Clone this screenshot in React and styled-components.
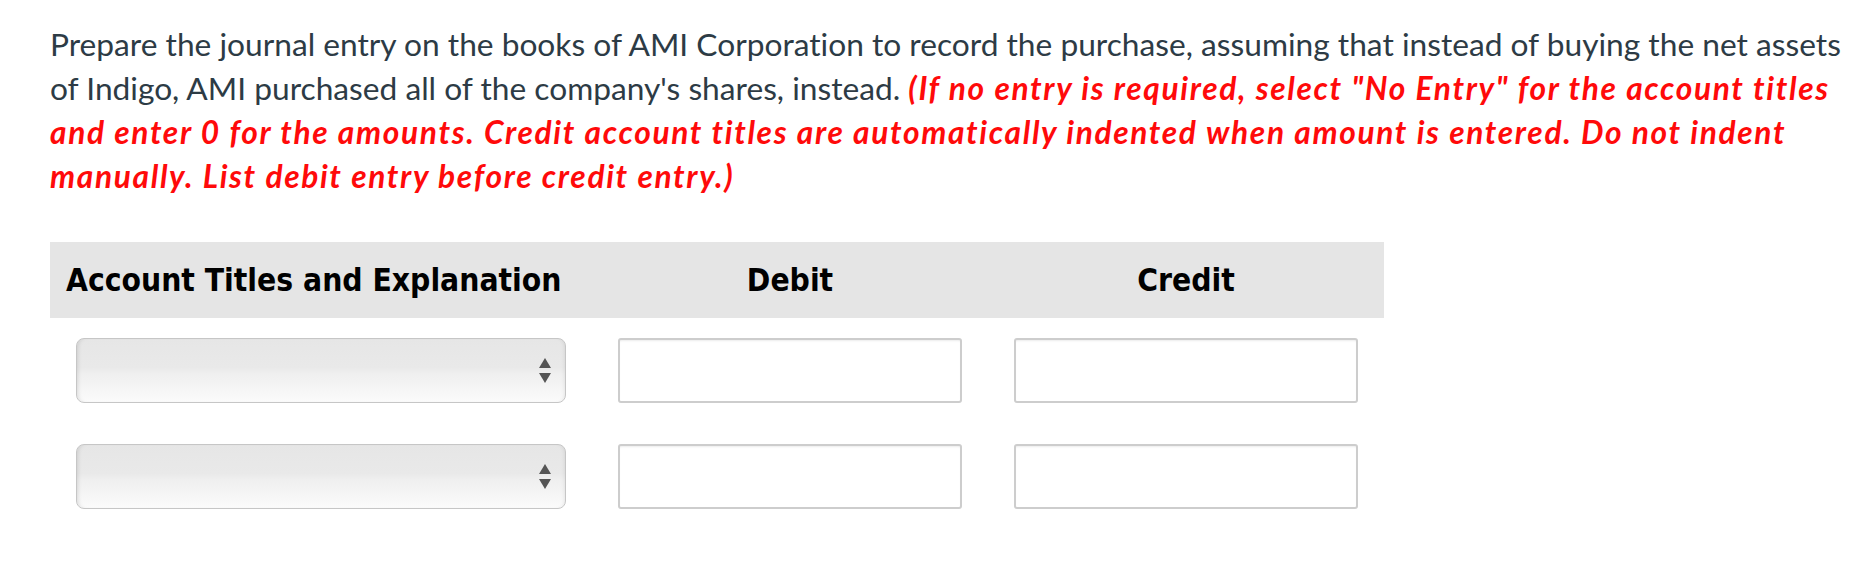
import styled, { createGlobalStyle } from 'styled-components'

const GlobalStyle = createGlobalStyle`
body {
  margin: 0;
  background: #fff;
}
`

const Page = styled.div`
padding: 22px 18px 0 50px;
`

const Question = styled.p`
margin: 0;
font-family: Lato, "Open Sans", sans-serif;
font-size: 31.7px;
line-height: 44px;
font-variant-ligatures: none;
color: #2d3b45;
`

const Hint = styled.em`
color: #ff0a0a;
font-weight: 700;
font-style: italic;
letter-spacing: 1.65px;
`

const Table = styled.div`
margin-top: 44px;
display: grid;
grid-template-columns: 542px 396px 396px;
width: 1334px;
`

const HeadCell = styled.div`
height: 76px;
display: flex;
align-items: center;
justify-content: ${(props) => props.align === 'left' ? 'flex-start' : 'center'};
padding-left: ${(props) => props.align === 'left' ? '16px' : '0'};
background-color: #e5e5e5;
font-family: "DejaVu Sans", Verdana, sans-serif;
font-stretch: condensed;
font-weight: 700;
font-size: 31.5px;
color: #000;
`

const Cell = styled.div`
padding: 20px 26px 21px 26px;
display: flex;
`

const Select = styled.div`
flex: 1;
height: 65px;
box-sizing: border-box;
border: 1px solid #c6c6c6;
border-radius: 8px;
background: linear-gradient(#e6e6e6 0%, #e9e9e9 45%, #efefef 55%, #fbfbfb 100%);
box-shadow: inset 4px 0 4px -3px rgba(0, 0, 0, 0.12), inset -3px 0 4px -3px rgba(0, 0, 0, 0.1);
display: flex;
align-items: center;
justify-content: flex-end;
padding-right: 14px;
`

const Arrows = styled.div`
display: flex;
flex-direction: column;
gap: 5px;
`

const Arrow = styled.div`
width: 0;
height: 0;
border-left: 6px solid transparent;
border-right: 6px solid transparent;
border-bottom: ${(props) => props.dir === 'up' ? '10px solid #555' : 'none'};
border-top: ${(props) => props.dir === 'down' ? '10px solid #555' : 'none'};
`

const Input = styled.div`
flex: 1;
height: 65px;
box-sizing: border-box;
border: 2px solid #cdcdcd;
border-radius: 3px;
background: #fff;
box-shadow: inset 0 2px 2px -1px rgba(0, 0, 0, 0.08);
`

const Row = () => (
  <>
    <Cell>
      <Select>
        <Arrows>
          <Arrow dir="up" />
          <Arrow dir="down" />
        </Arrows>
      </Select>
    </Cell>
    <Cell><Input /></Cell>
    <Cell><Input /></Cell>
  </>
)

const App = () => {
  return (
    <Page>
      <GlobalStyle />
      <Question>
        Prepare the journal entry on the books of AMI Corporation to record the purchase, assuming that instead of buying the net assets of Indigo, AMI purchased all of the company's shares, instead. <Hint>(If no entry is required, select "No Entry" for the account titles and enter 0 for the amounts. Credit account titles are automatically indented when amount is entered. Do not indent manually. List debit entry before credit entry.)</Hint>
      </Question>
      <Table>
        <HeadCell align="left">Account Titles and Explanation</HeadCell>
        <HeadCell>Debit</HeadCell>
        <HeadCell>Credit</HeadCell>
        <Row />
        <Row />
      </Table>
    </Page>
  )
}

export default App
